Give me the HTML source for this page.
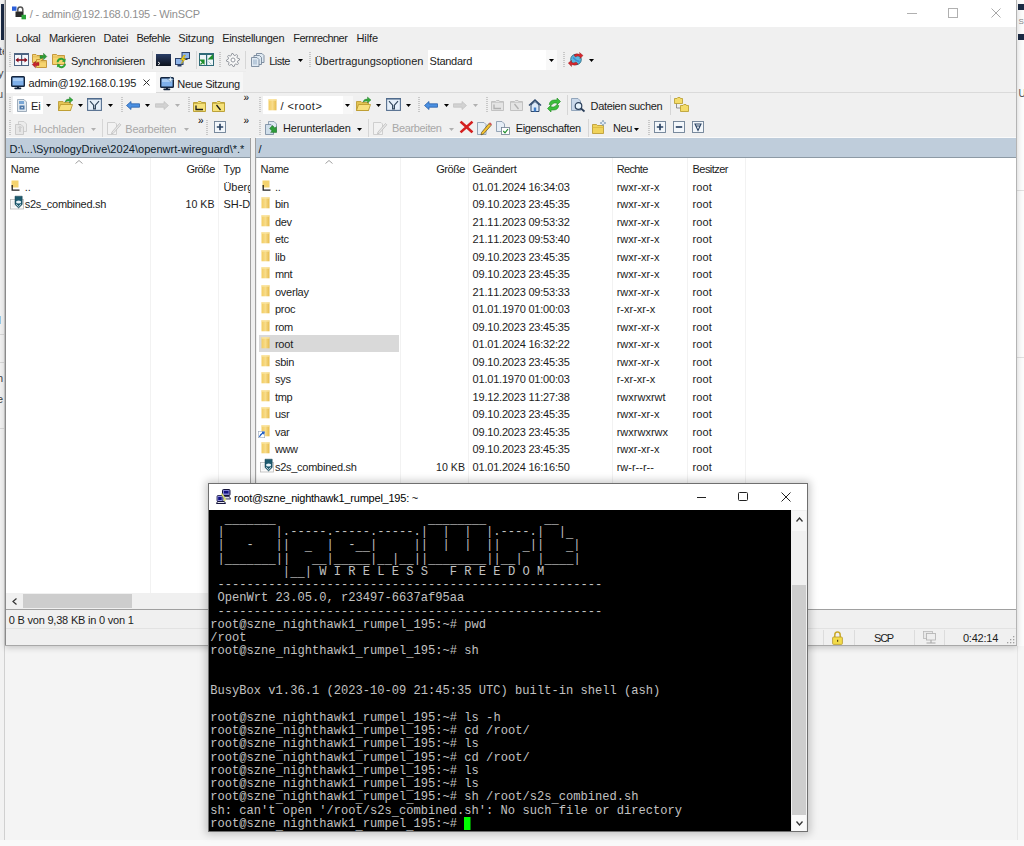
<!DOCTYPE html>
<html><head><meta charset="utf-8"><style>
html,body{margin:0;padding:0;width:1024px;height:846px;overflow:hidden;background:#f4f4f4}
#r{position:relative;width:1024px;height:846px;overflow:hidden}
#r div{position:absolute;box-sizing:border-box}
#r .t{white-space:pre;font-kerning:none;font-feature-settings:"kern" 0,"liga" 0;-webkit-text-stroke:0px}
</style></head><body><div id="r">
<div style="left:0px;top:0px;width:1024px;height:846px;background:#f4f4f4;"></div>
<div style="left:0px;top:0px;width:5px;height:846px;background:#f2f2f2;"></div>
<div class="t" style="left:-1.00px;top:45.85px;font-size:11px;line-height:11px;color:#444;font-family:'Liberation Sans';width:6.00px;overflow:hidden;">te</div>
<div class="t" style="left:-2.00px;top:68.35px;font-size:11px;line-height:11px;color:#444;font-family:'Liberation Sans';width:7.00px;overflow:hidden;">y</div>
<div class="t" style="left:-3.00px;top:89.35px;font-size:11px;line-height:11px;color:#555;font-family:'Liberation Sans';width:8.00px;overflow:hidden;">u</div>
<div class="t" style="left:-4.00px;top:314.85px;font-size:11px;line-height:11px;color:#555;font-family:'Liberation Sans';width:9.00px;overflow:hidden;">ll</div>
<div class="t" style="left:-3.00px;top:372.85px;font-size:11px;line-height:11px;color:#444;font-family:'Liberation Sans';width:8.00px;overflow:hidden;">h</div>
<div class="t" style="left:-3.00px;top:393.85px;font-size:11px;line-height:11px;color:#444;font-family:'Liberation Sans';width:8.00px;overflow:hidden;">e</div>
<div style="left:0px;top:428px;width:5px;height:1px;background:#d8d8d8;"></div>
<div style="left:0px;top:334px;width:5px;height:1px;background:#d8d8d8;"></div>
<div style="left:0px;top:362px;width:5px;height:1px;background:#d8d8d8;"></div>
<div style="left:1px;top:4px;width:4px;height:36px;background:#1b2a44;"></div>
<div style="left:4px;top:0px;width:1px;height:846px;background:#d0d0d0;"></div>
<div style="left:0px;top:840px;width:1024px;height:6px;background:#f9f9f9;"></div>
<div style="left:1017px;top:646px;width:7px;height:194px;background:#f6f6f6;"></div>
<div style="left:1017px;top:646px;width:1px;height:194px;background:#e6e6e6;"></div>
<div style="left:1017px;top:0px;width:7px;height:646px;background:#fcfcfc;"></div>
<div class="t" style="left:1018.50px;top:17.90px;font-size:8px;line-height:8px;color:#888;font-family:'Liberation Sans';">S</div>
<div class="t" style="left:1018.50px;top:89.20px;font-size:10px;line-height:10px;color:#555;font-family:'Liberation Sans';">U</div>
<div style="left:1017px;top:190px;width:7px;height:1px;background:#e0e0e0;"></div>
<div style="left:1017px;top:357px;width:7px;height:1px;background:#e0e0e0;"></div>
<div style="left:1018px;top:4px;width:6px;height:6px;background:#1b2a44;"></div>
<div style="left:1018px;top:34px;width:6px;height:6px;background:#1b2a44;"></div>
<div style="left:5px;top:0px;width:1012px;height:646px;background:#f0f0f0;box-shadow:0 2px 6px rgba(0,0,0,0.18);"></div>
<div style="left:5px;top:0px;width:1px;height:646px;background:#8a8a8a;"></div>
<div style="left:1016px;top:0px;width:1px;height:646px;background:#b4b4b4;"></div>
<div style="left:5px;top:645px;width:1012px;height:1px;background:#a8a8a8;"></div>
<div style="left:6px;top:0px;width:1010px;height:27px;background:#ffffff;"></div>
<div class="t" style="left:29.80px;top:9.15px;font-size:11px;line-height:11px;color:#8f8f8f;font-family:'Liberation Sans';letter-spacing:-0.176px;">/ - admin@192.168.0.195 - WinSCP</div>
<div style="left:907px;top:13px;width:10px;height:1px;background:#b0b0b0;"></div>
<div style="left:948px;top:8px;width:10px;height:10px;background:transparent;border:1px solid #b0b0b0;box-sizing:border-box;"></div>
<svg style="position:absolute;left:991px;top:8px" width="10" height="10" viewBox="0 0 10 10"><path d="M0.5 0.5L9.5 9.5M9.5 0.5L0.5 9.5" stroke="#a8a8a8" stroke-width="1"/></svg>
<div class="t" style="left:16.10px;top:32.95px;font-size:11px;line-height:11px;color:#1c1c1c;font-family:'Liberation Sans';letter-spacing:-0.439px;">Lokal</div>
<div class="t" style="left:48.90px;top:32.95px;font-size:11px;line-height:11px;color:#1c1c1c;font-family:'Liberation Sans';letter-spacing:-0.278px;">Markieren</div>
<div class="t" style="left:103.50px;top:32.95px;font-size:11px;line-height:11px;color:#1c1c1c;font-family:'Liberation Sans';letter-spacing:-0.176px;">Datei</div>
<div class="t" style="left:136.40px;top:32.95px;font-size:11px;line-height:11px;color:#1c1c1c;font-family:'Liberation Sans';letter-spacing:-0.530px;">Befehle</div>
<div class="t" style="left:178.30px;top:32.95px;font-size:11px;line-height:11px;color:#1c1c1c;font-family:'Liberation Sans';letter-spacing:-0.156px;">Sitzung</div>
<div class="t" style="left:222.20px;top:32.95px;font-size:11px;line-height:11px;color:#1c1c1c;font-family:'Liberation Sans';letter-spacing:-0.311px;">Einstellungen</div>
<div class="t" style="left:293.30px;top:32.95px;font-size:11px;line-height:11px;color:#1c1c1c;font-family:'Liberation Sans';letter-spacing:-0.538px;">Fernrechner</div>
<div class="t" style="left:356.50px;top:32.95px;font-size:11px;line-height:11px;color:#1c1c1c;font-family:'Liberation Sans';letter-spacing:-0.101px;">Hilfe</div>
<div style="left:6px;top:71px;width:240px;height:1px;background:#ececec;"></div>
<svg style="position:absolute;left:9px;top:52px" width="2" height="16" viewBox="0 0 2 16"><rect x="0" y="0" width="2" height="1" fill="#c8c8c8"/><rect x="0" y="2" width="2" height="1" fill="#c8c8c8"/><rect x="0" y="4" width="2" height="1" fill="#c8c8c8"/><rect x="0" y="6" width="2" height="1" fill="#c8c8c8"/><rect x="0" y="8" width="2" height="1" fill="#c8c8c8"/><rect x="0" y="10" width="2" height="1" fill="#c8c8c8"/><rect x="0" y="12" width="2" height="1" fill="#c8c8c8"/><rect x="0" y="14" width="2" height="1" fill="#c8c8c8"/></svg>
<div class="t" style="left:70.90px;top:56.15px;font-size:11px;line-height:11px;color:#1c1c1c;font-family:'Liberation Sans';letter-spacing:-0.325px;">Synchronisieren</div>
<div style="left:152px;top:51px;width:1px;height:18px;background:#d6d6d6;"></div>
<div style="left:196px;top:51px;width:1px;height:18px;background:#d6d6d6;"></div>
<svg style="position:absolute;left:219px;top:52px" width="2" height="16" viewBox="0 0 2 16"><rect x="0" y="0" width="2" height="1" fill="#c8c8c8"/><rect x="0" y="2" width="2" height="1" fill="#c8c8c8"/><rect x="0" y="4" width="2" height="1" fill="#c8c8c8"/><rect x="0" y="6" width="2" height="1" fill="#c8c8c8"/><rect x="0" y="8" width="2" height="1" fill="#c8c8c8"/><rect x="0" y="10" width="2" height="1" fill="#c8c8c8"/><rect x="0" y="12" width="2" height="1" fill="#c8c8c8"/><rect x="0" y="14" width="2" height="1" fill="#c8c8c8"/></svg>
<div style="left:245px;top:51px;width:1px;height:18px;background:#d6d6d6;"></div>
<div class="t" style="left:269.30px;top:56.15px;font-size:11px;line-height:11px;color:#1c1c1c;font-family:'Liberation Sans';letter-spacing:-0.547px;">Liste</div>
<svg style="position:absolute;left:297.6px;top:59px" width="5" height="3" viewBox="0 0 5 3"><path d="M0 0H5L2.5 3Z" fill="#000"/></svg>
<svg style="position:absolute;left:309px;top:52px" width="2" height="16" viewBox="0 0 2 16"><rect x="0" y="0" width="2" height="1" fill="#c8c8c8"/><rect x="0" y="2" width="2" height="1" fill="#c8c8c8"/><rect x="0" y="4" width="2" height="1" fill="#c8c8c8"/><rect x="0" y="6" width="2" height="1" fill="#c8c8c8"/><rect x="0" y="8" width="2" height="1" fill="#c8c8c8"/><rect x="0" y="10" width="2" height="1" fill="#c8c8c8"/><rect x="0" y="12" width="2" height="1" fill="#c8c8c8"/><rect x="0" y="14" width="2" height="1" fill="#c8c8c8"/></svg>
<div class="t" style="left:314.70px;top:56.15px;font-size:11px;line-height:11px;color:#1c1c1c;font-family:'Liberation Sans';letter-spacing:-0.008px;">Übertragungsoptionen</div>
<div style="left:428px;top:50px;width:118px;height:20px;background:#ffffff;"></div>
<div style="left:546px;top:50px;width:11px;height:20px;background:#f8f8f8;"></div>
<div class="t" style="left:429.60px;top:56.15px;font-size:11px;line-height:11px;color:#1c1c1c;font-family:'Liberation Sans';letter-spacing:-0.281px;">Standard</div>
<svg style="position:absolute;left:549px;top:59px" width="5" height="3" viewBox="0 0 5 3"><path d="M0 0H5L2.5 3Z" fill="#000"/></svg>
<svg style="position:absolute;left:563px;top:52px" width="2" height="16" viewBox="0 0 2 16"><rect x="0" y="0" width="2" height="1" fill="#c8c8c8"/><rect x="0" y="2" width="2" height="1" fill="#c8c8c8"/><rect x="0" y="4" width="2" height="1" fill="#c8c8c8"/><rect x="0" y="6" width="2" height="1" fill="#c8c8c8"/><rect x="0" y="8" width="2" height="1" fill="#c8c8c8"/><rect x="0" y="10" width="2" height="1" fill="#c8c8c8"/><rect x="0" y="12" width="2" height="1" fill="#c8c8c8"/><rect x="0" y="14" width="2" height="1" fill="#c8c8c8"/></svg>
<svg style="position:absolute;left:588.5px;top:59px" width="5" height="3" viewBox="0 0 5 3"><path d="M0 0H5L2.5 3Z" fill="#000"/></svg>
<div style="left:156px;top:72px;width:87px;height:20px;background:#f6f6f6;"></div>
<div style="left:6px;top:72px;width:150px;height:21px;background:#ffffff;"></div>
<div style="left:6px;top:92px;width:1010px;height:1px;background:#dadada;"></div>
<div style="left:6px;top:92px;width:150px;height:1px;background:#ffffff;"></div>
<div class="t" style="left:28.60px;top:78.25px;font-size:11px;line-height:11px;color:#1c1c1c;font-family:'Liberation Sans';letter-spacing:-0.204px;">admin@192.168.0.195</div>
<svg style="position:absolute;left:143px;top:79px" width="7" height="7" viewBox="0 0 7 7"><path d="M0.5 0.5L6.5 6.5M6.5 0.5L0.5 6.5" stroke="#333" stroke-width="1"/></svg>
<div class="t" style="left:177.30px;top:78.75px;font-size:11px;line-height:11px;color:#1c1c1c;font-family:'Liberation Sans';letter-spacing:-0.295px;">Neue Sitzung</div>
<svg style="position:absolute;left:9px;top:97px" width="2" height="16" viewBox="0 0 2 16"><rect x="0" y="0" width="2" height="1" fill="#c8c8c8"/><rect x="0" y="2" width="2" height="1" fill="#c8c8c8"/><rect x="0" y="4" width="2" height="1" fill="#c8c8c8"/><rect x="0" y="6" width="2" height="1" fill="#c8c8c8"/><rect x="0" y="8" width="2" height="1" fill="#c8c8c8"/><rect x="0" y="10" width="2" height="1" fill="#c8c8c8"/><rect x="0" y="12" width="2" height="1" fill="#c8c8c8"/><rect x="0" y="14" width="2" height="1" fill="#c8c8c8"/></svg>
<div style="left:13px;top:96px;width:30px;height:18px;background:#ffffff;"></div>
<div class="t" style="left:31.00px;top:100.85px;font-size:11px;line-height:11px;color:#1c1c1c;font-family:'Liberation Sans';width:9.50px;overflow:hidden;">Eigenschaften</div>
<svg style="position:absolute;left:46px;top:103.5px" width="5" height="3" viewBox="0 0 5 3"><path d="M0 0H5L2.5 3Z" fill="#000"/></svg>
<svg style="position:absolute;left:78px;top:103.5px" width="5" height="3" viewBox="0 0 5 3"><path d="M0 0H5L2.5 3Z" fill="#000"/></svg>
<svg style="position:absolute;left:107.5px;top:103.5px" width="5" height="3" viewBox="0 0 5 3"><path d="M0 0H5L2.5 3Z" fill="#000"/></svg>
<svg style="position:absolute;left:120.5px;top:97px" width="2" height="16" viewBox="0 0 2 16"><rect x="0" y="0" width="2" height="1" fill="#c8c8c8"/><rect x="0" y="2" width="2" height="1" fill="#c8c8c8"/><rect x="0" y="4" width="2" height="1" fill="#c8c8c8"/><rect x="0" y="6" width="2" height="1" fill="#c8c8c8"/><rect x="0" y="8" width="2" height="1" fill="#c8c8c8"/><rect x="0" y="10" width="2" height="1" fill="#c8c8c8"/><rect x="0" y="12" width="2" height="1" fill="#c8c8c8"/><rect x="0" y="14" width="2" height="1" fill="#c8c8c8"/></svg>
<svg style="position:absolute;left:145.3px;top:103.5px" width="5" height="3" viewBox="0 0 5 3"><path d="M0 0H5L2.5 3Z" fill="#000"/></svg>
<svg style="position:absolute;left:174.5px;top:103.5px" width="5" height="3" viewBox="0 0 5 3"><path d="M0 0H5L2.5 3Z" fill="#b0b0b0"/></svg>
<svg style="position:absolute;left:188px;top:97px" width="2" height="16" viewBox="0 0 2 16"><rect x="0" y="0" width="2" height="1" fill="#c8c8c8"/><rect x="0" y="2" width="2" height="1" fill="#c8c8c8"/><rect x="0" y="4" width="2" height="1" fill="#c8c8c8"/><rect x="0" y="6" width="2" height="1" fill="#c8c8c8"/><rect x="0" y="8" width="2" height="1" fill="#c8c8c8"/><rect x="0" y="10" width="2" height="1" fill="#c8c8c8"/><rect x="0" y="12" width="2" height="1" fill="#c8c8c8"/><rect x="0" y="14" width="2" height="1" fill="#c8c8c8"/></svg>
<div class="t" style="left:243.50px;top:93.20px;font-size:10px;line-height:10px;color:#000;font-family:'Liberation Sans';">»</div>
<svg style="position:absolute;left:9px;top:120px" width="2" height="16" viewBox="0 0 2 16"><rect x="0" y="0" width="2" height="1" fill="#c8c8c8"/><rect x="0" y="2" width="2" height="1" fill="#c8c8c8"/><rect x="0" y="4" width="2" height="1" fill="#c8c8c8"/><rect x="0" y="6" width="2" height="1" fill="#c8c8c8"/><rect x="0" y="8" width="2" height="1" fill="#c8c8c8"/><rect x="0" y="10" width="2" height="1" fill="#c8c8c8"/><rect x="0" y="12" width="2" height="1" fill="#c8c8c8"/><rect x="0" y="14" width="2" height="1" fill="#c8c8c8"/></svg>
<div class="t" style="left:33.60px;top:123.75px;font-size:11px;line-height:11px;color:#a8a8a8;font-family:'Liberation Sans';letter-spacing:-0.199px;">Hochladen</div>
<svg style="position:absolute;left:91px;top:127.5px" width="5" height="3" viewBox="0 0 5 3"><path d="M0 0H5L2.5 3Z" fill="#b0b0b0"/></svg>
<div style="left:102px;top:119px;width:1px;height:18px;background:#d6d6d6;"></div>
<div class="t" style="left:125.30px;top:123.75px;font-size:11px;line-height:11px;color:#a8a8a8;font-family:'Liberation Sans';letter-spacing:-0.241px;">Bearbeiten</div>
<svg style="position:absolute;left:183.5px;top:127.5px" width="5" height="3" viewBox="0 0 5 3"><path d="M0 0H5L2.5 3Z" fill="#b0b0b0"/></svg>
<div class="t" style="left:198.00px;top:116.20px;font-size:10px;line-height:10px;color:#000;font-family:'Liberation Sans';">»</div>
<svg style="position:absolute;left:206px;top:120px" width="2" height="16" viewBox="0 0 2 16"><rect x="0" y="0" width="2" height="1" fill="#c8c8c8"/><rect x="0" y="2" width="2" height="1" fill="#c8c8c8"/><rect x="0" y="4" width="2" height="1" fill="#c8c8c8"/><rect x="0" y="6" width="2" height="1" fill="#c8c8c8"/><rect x="0" y="8" width="2" height="1" fill="#c8c8c8"/><rect x="0" y="10" width="2" height="1" fill="#c8c8c8"/><rect x="0" y="12" width="2" height="1" fill="#c8c8c8"/><rect x="0" y="14" width="2" height="1" fill="#c8c8c8"/></svg>
<div class="t" style="left:243.50px;top:116.20px;font-size:10px;line-height:10px;color:#000;font-family:'Liberation Sans';">»</div>
<svg style="position:absolute;left:258.5px;top:97px" width="2" height="16" viewBox="0 0 2 16"><rect x="0" y="0" width="2" height="1" fill="#c8c8c8"/><rect x="0" y="2" width="2" height="1" fill="#c8c8c8"/><rect x="0" y="4" width="2" height="1" fill="#c8c8c8"/><rect x="0" y="6" width="2" height="1" fill="#c8c8c8"/><rect x="0" y="8" width="2" height="1" fill="#c8c8c8"/><rect x="0" y="10" width="2" height="1" fill="#c8c8c8"/><rect x="0" y="12" width="2" height="1" fill="#c8c8c8"/><rect x="0" y="14" width="2" height="1" fill="#c8c8c8"/></svg>
<div style="left:263px;top:96px;width:80px;height:18px;background:#ffffff;"></div>
<div style="left:343px;top:96px;width:10px;height:18px;background:#f7f7f7;"></div>
<div class="t" style="left:280.50px;top:100.65px;font-size:11px;line-height:11px;color:#1c1c1c;font-family:'Liberation Sans';letter-spacing:0.486px;">/ &lt;root&gt;</div>
<svg style="position:absolute;left:344.5px;top:103.5px" width="5" height="3" viewBox="0 0 5 3"><path d="M0 0H5L2.5 3Z" fill="#000"/></svg>
<svg style="position:absolute;left:376px;top:103.5px" width="5" height="3" viewBox="0 0 5 3"><path d="M0 0H5L2.5 3Z" fill="#000"/></svg>
<svg style="position:absolute;left:405.5px;top:103.5px" width="5" height="3" viewBox="0 0 5 3"><path d="M0 0H5L2.5 3Z" fill="#000"/></svg>
<svg style="position:absolute;left:418px;top:97px" width="2" height="16" viewBox="0 0 2 16"><rect x="0" y="0" width="2" height="1" fill="#c8c8c8"/><rect x="0" y="2" width="2" height="1" fill="#c8c8c8"/><rect x="0" y="4" width="2" height="1" fill="#c8c8c8"/><rect x="0" y="6" width="2" height="1" fill="#c8c8c8"/><rect x="0" y="8" width="2" height="1" fill="#c8c8c8"/><rect x="0" y="10" width="2" height="1" fill="#c8c8c8"/><rect x="0" y="12" width="2" height="1" fill="#c8c8c8"/><rect x="0" y="14" width="2" height="1" fill="#c8c8c8"/></svg>
<svg style="position:absolute;left:443.5px;top:103.5px" width="5" height="3" viewBox="0 0 5 3"><path d="M0 0H5L2.5 3Z" fill="#000"/></svg>
<svg style="position:absolute;left:472.5px;top:103.5px" width="5" height="3" viewBox="0 0 5 3"><path d="M0 0H5L2.5 3Z" fill="#b0b0b0"/></svg>
<svg style="position:absolute;left:485.5px;top:97px" width="2" height="16" viewBox="0 0 2 16"><rect x="0" y="0" width="2" height="1" fill="#c8c8c8"/><rect x="0" y="2" width="2" height="1" fill="#c8c8c8"/><rect x="0" y="4" width="2" height="1" fill="#c8c8c8"/><rect x="0" y="6" width="2" height="1" fill="#c8c8c8"/><rect x="0" y="8" width="2" height="1" fill="#c8c8c8"/><rect x="0" y="10" width="2" height="1" fill="#c8c8c8"/><rect x="0" y="12" width="2" height="1" fill="#c8c8c8"/><rect x="0" y="14" width="2" height="1" fill="#c8c8c8"/></svg>
<div style="left:567px;top:95px;width:1px;height:20px;background:#d6d6d6;"></div>
<div class="t" style="left:590.60px;top:101.15px;font-size:11px;line-height:11px;color:#1c1c1c;font-family:'Liberation Sans';letter-spacing:-0.332px;">Dateien suchen</div>
<div style="left:670px;top:95px;width:1px;height:20px;background:#d6d6d6;"></div>
<svg style="position:absolute;left:258.5px;top:120px" width="2" height="16" viewBox="0 0 2 16"><rect x="0" y="0" width="2" height="1" fill="#c8c8c8"/><rect x="0" y="2" width="2" height="1" fill="#c8c8c8"/><rect x="0" y="4" width="2" height="1" fill="#c8c8c8"/><rect x="0" y="6" width="2" height="1" fill="#c8c8c8"/><rect x="0" y="8" width="2" height="1" fill="#c8c8c8"/><rect x="0" y="10" width="2" height="1" fill="#c8c8c8"/><rect x="0" y="12" width="2" height="1" fill="#c8c8c8"/><rect x="0" y="14" width="2" height="1" fill="#c8c8c8"/></svg>
<div class="t" style="left:283.00px;top:123.25px;font-size:11px;line-height:11px;color:#1c1c1c;font-family:'Liberation Sans';letter-spacing:-0.147px;">Herunterladen</div>
<svg style="position:absolute;left:356.5px;top:127.5px" width="5" height="3" viewBox="0 0 5 3"><path d="M0 0H5L2.5 3Z" fill="#000"/></svg>
<div style="left:368px;top:119px;width:1px;height:18px;background:#d6d6d6;"></div>
<div class="t" style="left:392.00px;top:123.25px;font-size:11px;line-height:11px;color:#a8a8a8;font-family:'Liberation Sans';letter-spacing:-0.361px;">Bearbeiten</div>
<svg style="position:absolute;left:448.5px;top:127.5px" width="5" height="3" viewBox="0 0 5 3"><path d="M0 0H5L2.5 3Z" fill="#b0b0b0"/></svg>
<div class="t" style="left:515.70px;top:123.25px;font-size:11px;line-height:11px;color:#1c1c1c;font-family:'Liberation Sans';letter-spacing:-0.363px;">Eigenschaften</div>
<div style="left:588px;top:119px;width:1px;height:18px;background:#d6d6d6;"></div>
<div class="t" style="left:613.00px;top:123.25px;font-size:11px;line-height:11px;color:#1c1c1c;font-family:'Liberation Sans';letter-spacing:-0.393px;">Neu</div>
<svg style="position:absolute;left:634px;top:127.5px" width="5" height="3" viewBox="0 0 5 3"><path d="M0 0H5L2.5 3Z" fill="#000"/></svg>
<svg style="position:absolute;left:648px;top:120px" width="2" height="16" viewBox="0 0 2 16"><rect x="0" y="0" width="2" height="1" fill="#c8c8c8"/><rect x="0" y="2" width="2" height="1" fill="#c8c8c8"/><rect x="0" y="4" width="2" height="1" fill="#c8c8c8"/><rect x="0" y="6" width="2" height="1" fill="#c8c8c8"/><rect x="0" y="8" width="2" height="1" fill="#c8c8c8"/><rect x="0" y="10" width="2" height="1" fill="#c8c8c8"/><rect x="0" y="12" width="2" height="1" fill="#c8c8c8"/><rect x="0" y="14" width="2" height="1" fill="#c8c8c8"/></svg>
<div style="left:6px;top:137px;width:245px;height:1px;background:#fafafa;"></div>
<div style="left:256px;top:137px;width:760px;height:1px;background:#fafafa;"></div>
<div style="left:6px;top:138px;width:245px;height:20px;background:#bfcddb;"></div>
<div style="left:256px;top:138px;width:760px;height:20px;background:#bfcddb;"></div>
<div style="left:6px;top:157px;width:245px;height:1px;background:#8d9aa5;"></div>
<div style="left:256px;top:157px;width:760px;height:1px;background:#8d9aa5;"></div>
<div class="t" style="left:9.50px;top:144.15px;font-size:11px;line-height:11px;color:#0c1a2a;font-family:'Liberation Sans';letter-spacing:0.029px;">D:\...\SynologyDrive\2024\openwrt-wireguard\*.*</div>
<div class="t" style="left:258.40px;top:144.15px;font-size:11px;line-height:11px;color:#0c1a2a;font-family:'Liberation Sans';">/</div>
<div style="left:6px;top:158px;width:245px;height:435px;background:#ffffff;"></div>
<div style="left:250px;top:138px;width:1px;height:471px;background:#a0a0a0;"></div>
<div style="left:150px;top:158px;width:1px;height:435px;background:#f2f2f2;"></div>
<div style="left:218px;top:158px;width:1px;height:435px;background:#f2f2f2;"></div>
<div class="t" style="left:10.80px;top:163.75px;font-size:11px;line-height:11px;color:#1c1c1c;font-family:'Liberation Sans';letter-spacing:-0.211px;">Name</div>
<svg style="position:absolute;left:75px;top:159.5px" width="8" height="4" viewBox="0 0 8 4"><path d="M0.5 3.5L4 0.5L7.5 3.5" stroke="#a0a0a0" fill="none"/></svg>
<div class="t" style="left:186.50px;top:163.75px;font-size:11px;line-height:11px;color:#1c1c1c;font-family:'Liberation Sans';letter-spacing:-0.595px;">Größe</div>
<div class="t" style="left:223.40px;top:163.75px;font-size:11px;line-height:11px;color:#1c1c1c;font-family:'Liberation Sans';letter-spacing:-0.446px;">Typ</div>
<div class="t" style="left:24.80px;top:181.65px;font-size:11px;line-height:11px;color:#1c1c1c;font-family:'Liberation Sans';">..</div>
<div class="t" style="left:223.40px;top:181.65px;font-size:11px;line-height:11px;color:#1c1c1c;font-family:'Liberation Sans';width:27.10px;overflow:hidden;">Übergeordnetes Verzeichnis</div>
<div class="t" style="left:24.80px;top:198.95px;font-size:11px;line-height:11px;color:#1c1c1c;font-family:'Liberation Sans';letter-spacing:-0.294px;">s2s_combined.sh</div>
<div class="t" style="left:185.62px;top:199.29px;font-size:10.6px;line-height:10.6px;color:#1c1c1c;font-family:'Liberation Sans';">10 KB</div>
<div class="t" style="left:223.40px;top:198.95px;font-size:11px;line-height:11px;color:#1c1c1c;font-family:'Liberation Sans';width:27.10px;overflow:hidden;">SH-Datei</div>
<div style="left:6px;top:593px;width:245px;height:16px;background:#f0f0f0;"></div>
<div style="left:23px;top:594px;width:109px;height:14px;background:#cdcdcd;"></div>
<svg style="position:absolute;left:12px;top:598px" width="5" height="7" viewBox="0 0 5 7"><path d="M4.5 0.5L1 3.5L4.5 6.5" stroke="#333" stroke-width="1.2" fill="none"/></svg>
<div style="left:6px;top:609px;width:245px;height:1px;background:#a0a0a0;"></div>
<div style="left:255px;top:138px;width:1px;height:471px;background:#a0a0a0;"></div>
<div style="left:257px;top:158px;width:759px;height:451px;background:#ffffff;"></div>
<div style="left:400px;top:158px;width:1px;height:451px;background:#f2f2f2;"></div>
<div style="left:468px;top:158px;width:1px;height:451px;background:#f2f2f2;"></div>
<div style="left:612px;top:158px;width:1px;height:451px;background:#f2f2f2;"></div>
<div style="left:687px;top:158px;width:1px;height:451px;background:#f2f2f2;"></div>
<div style="left:745px;top:158px;width:1px;height:451px;background:#f2f2f2;"></div>
<div style="left:256px;top:609px;width:760px;height:1px;background:#a0a0a0;"></div>
<div style="left:259px;top:335px;width:140px;height:17px;background:#d9d9d9;"></div>
<div class="t" style="left:260.50px;top:163.75px;font-size:11px;line-height:11px;color:#1c1c1c;font-family:'Liberation Sans';letter-spacing:-0.211px;">Name</div>
<svg style="position:absolute;left:325px;top:159.5px" width="8" height="4" viewBox="0 0 8 4"><path d="M0.5 3.5L4 0.5L7.5 3.5" stroke="#a0a0a0" fill="none"/></svg>
<div class="t" style="left:436.30px;top:163.75px;font-size:11px;line-height:11px;color:#1c1c1c;font-family:'Liberation Sans';letter-spacing:-0.495px;">Größe</div>
<div class="t" style="left:472.60px;top:163.75px;font-size:11px;line-height:11px;color:#1c1c1c;font-family:'Liberation Sans';letter-spacing:-0.233px;">Geändert</div>
<div class="t" style="left:616.70px;top:163.75px;font-size:11px;line-height:11px;color:#1c1c1c;font-family:'Liberation Sans';letter-spacing:-0.659px;">Rechte</div>
<div class="t" style="left:692.50px;top:163.75px;font-size:11px;line-height:11px;color:#1c1c1c;font-family:'Liberation Sans';letter-spacing:-0.529px;">Besitzer</div>
<div class="t" style="left:274.90px;top:181.65px;font-size:11px;line-height:11px;color:#1c1c1c;font-family:'Liberation Sans';letter-spacing:-0.138px;">..</div>
<div class="t" style="left:472.60px;top:181.65px;font-size:11px;line-height:11px;color:#1c1c1c;font-family:'Liberation Sans';letter-spacing:-0.207px;">01.01.2024 16:34:03</div>
<div class="t" style="left:616.70px;top:181.65px;font-size:11px;line-height:11px;color:#1c1c1c;font-family:'Liberation Sans';">rwxr-xr-x</div>
<div class="t" style="left:692.50px;top:181.65px;font-size:11px;line-height:11px;color:#1c1c1c;font-family:'Liberation Sans';letter-spacing:0.136px;">root</div>
<div class="t" style="left:274.90px;top:199.15px;font-size:11px;line-height:11px;color:#1c1c1c;font-family:'Liberation Sans';letter-spacing:-0.220px;">bin</div>
<div class="t" style="left:472.60px;top:199.15px;font-size:11px;line-height:11px;color:#1c1c1c;font-family:'Liberation Sans';letter-spacing:-0.207px;">09.10.2023 23:45:35</div>
<div class="t" style="left:616.70px;top:199.15px;font-size:11px;line-height:11px;color:#1c1c1c;font-family:'Liberation Sans';">rwxr-xr-x</div>
<div class="t" style="left:692.50px;top:199.15px;font-size:11px;line-height:11px;color:#1c1c1c;font-family:'Liberation Sans';letter-spacing:0.136px;">root</div>
<div class="t" style="left:274.90px;top:216.65px;font-size:11px;line-height:11px;color:#1c1c1c;font-family:'Liberation Sans';letter-spacing:-0.266px;">dev</div>
<div class="t" style="left:472.60px;top:216.65px;font-size:11px;line-height:11px;color:#1c1c1c;font-family:'Liberation Sans';letter-spacing:-0.207px;">21.11.2023 09:53:32</div>
<div class="t" style="left:616.70px;top:216.65px;font-size:11px;line-height:11px;color:#1c1c1c;font-family:'Liberation Sans';">rwxr-xr-x</div>
<div class="t" style="left:692.50px;top:216.65px;font-size:11px;line-height:11px;color:#1c1c1c;font-family:'Liberation Sans';letter-spacing:0.136px;">root</div>
<div class="t" style="left:274.90px;top:234.15px;font-size:11px;line-height:11px;color:#1c1c1c;font-family:'Liberation Sans';letter-spacing:-0.220px;">etc</div>
<div class="t" style="left:472.60px;top:234.15px;font-size:11px;line-height:11px;color:#1c1c1c;font-family:'Liberation Sans';letter-spacing:-0.207px;">21.11.2023 09:53:40</div>
<div class="t" style="left:616.70px;top:234.15px;font-size:11px;line-height:11px;color:#1c1c1c;font-family:'Liberation Sans';">rwxr-xr-x</div>
<div class="t" style="left:692.50px;top:234.15px;font-size:11px;line-height:11px;color:#1c1c1c;font-family:'Liberation Sans';letter-spacing:0.136px;">root</div>
<div class="t" style="left:274.90px;top:251.65px;font-size:11px;line-height:11px;color:#1c1c1c;font-family:'Liberation Sans';letter-spacing:-0.165px;">lib</div>
<div class="t" style="left:472.60px;top:251.65px;font-size:11px;line-height:11px;color:#1c1c1c;font-family:'Liberation Sans';letter-spacing:-0.207px;">09.10.2023 23:45:35</div>
<div class="t" style="left:616.70px;top:251.65px;font-size:11px;line-height:11px;color:#1c1c1c;font-family:'Liberation Sans';">rwxr-xr-x</div>
<div class="t" style="left:692.50px;top:251.65px;font-size:11px;line-height:11px;color:#1c1c1c;font-family:'Liberation Sans';letter-spacing:0.136px;">root</div>
<div class="t" style="left:274.90px;top:269.15px;font-size:11px;line-height:11px;color:#1c1c1c;font-family:'Liberation Sans';letter-spacing:-0.275px;">mnt</div>
<div class="t" style="left:472.60px;top:269.15px;font-size:11px;line-height:11px;color:#1c1c1c;font-family:'Liberation Sans';letter-spacing:-0.207px;">09.10.2023 23:45:35</div>
<div class="t" style="left:616.70px;top:269.15px;font-size:11px;line-height:11px;color:#1c1c1c;font-family:'Liberation Sans';">rwxr-xr-x</div>
<div class="t" style="left:692.50px;top:269.15px;font-size:11px;line-height:11px;color:#1c1c1c;font-family:'Liberation Sans';letter-spacing:0.136px;">root</div>
<div class="t" style="left:274.90px;top:286.65px;font-size:11px;line-height:11px;color:#1c1c1c;font-family:'Liberation Sans';letter-spacing:-0.228px;">overlay</div>
<div class="t" style="left:472.60px;top:286.65px;font-size:11px;line-height:11px;color:#1c1c1c;font-family:'Liberation Sans';letter-spacing:-0.207px;">21.11.2023 09:53:33</div>
<div class="t" style="left:616.70px;top:286.65px;font-size:11px;line-height:11px;color:#1c1c1c;font-family:'Liberation Sans';">rwxr-xr-x</div>
<div class="t" style="left:692.50px;top:286.65px;font-size:11px;line-height:11px;color:#1c1c1c;font-family:'Liberation Sans';letter-spacing:0.136px;">root</div>
<div class="t" style="left:274.90px;top:304.15px;font-size:11px;line-height:11px;color:#1c1c1c;font-family:'Liberation Sans';letter-spacing:-0.241px;">proc</div>
<div class="t" style="left:472.60px;top:304.15px;font-size:11px;line-height:11px;color:#1c1c1c;font-family:'Liberation Sans';letter-spacing:-0.207px;">01.01.1970 01:00:03</div>
<div class="t" style="left:616.70px;top:304.15px;font-size:11px;line-height:11px;color:#1c1c1c;font-family:'Liberation Sans';">r-xr-xr-x</div>
<div class="t" style="left:692.50px;top:304.15px;font-size:11px;line-height:11px;color:#1c1c1c;font-family:'Liberation Sans';letter-spacing:0.136px;">root</div>
<div class="t" style="left:274.90px;top:321.65px;font-size:11px;line-height:11px;color:#1c1c1c;font-family:'Liberation Sans';letter-spacing:-0.284px;">rom</div>
<div class="t" style="left:472.60px;top:321.65px;font-size:11px;line-height:11px;color:#1c1c1c;font-family:'Liberation Sans';letter-spacing:-0.207px;">09.10.2023 23:45:35</div>
<div class="t" style="left:616.70px;top:321.65px;font-size:11px;line-height:11px;color:#1c1c1c;font-family:'Liberation Sans';">rwxr-xr-x</div>
<div class="t" style="left:692.50px;top:321.65px;font-size:11px;line-height:11px;color:#1c1c1c;font-family:'Liberation Sans';letter-spacing:0.136px;">root</div>
<div class="t" style="left:274.90px;top:339.15px;font-size:11px;line-height:11px;color:#1c1c1c;font-family:'Liberation Sans';letter-spacing:-0.213px;">root</div>
<div class="t" style="left:472.60px;top:339.15px;font-size:11px;line-height:11px;color:#1c1c1c;font-family:'Liberation Sans';letter-spacing:-0.207px;">01.01.2024 16:32:22</div>
<div class="t" style="left:616.70px;top:339.15px;font-size:11px;line-height:11px;color:#1c1c1c;font-family:'Liberation Sans';">rwxr-xr-x</div>
<div class="t" style="left:692.50px;top:339.15px;font-size:11px;line-height:11px;color:#1c1c1c;font-family:'Liberation Sans';letter-spacing:0.136px;">root</div>
<div class="t" style="left:274.90px;top:356.65px;font-size:11px;line-height:11px;color:#1c1c1c;font-family:'Liberation Sans';letter-spacing:-0.227px;">sbin</div>
<div class="t" style="left:472.60px;top:356.65px;font-size:11px;line-height:11px;color:#1c1c1c;font-family:'Liberation Sans';letter-spacing:-0.207px;">09.10.2023 23:45:35</div>
<div class="t" style="left:616.70px;top:356.65px;font-size:11px;line-height:11px;color:#1c1c1c;font-family:'Liberation Sans';">rwxr-xr-x</div>
<div class="t" style="left:692.50px;top:356.65px;font-size:11px;line-height:11px;color:#1c1c1c;font-family:'Liberation Sans';letter-spacing:0.136px;">root</div>
<div class="t" style="left:274.90px;top:374.15px;font-size:11px;line-height:11px;color:#1c1c1c;font-family:'Liberation Sans';letter-spacing:-0.248px;">sys</div>
<div class="t" style="left:472.60px;top:374.15px;font-size:11px;line-height:11px;color:#1c1c1c;font-family:'Liberation Sans';letter-spacing:-0.207px;">01.01.1970 01:00:03</div>
<div class="t" style="left:616.70px;top:374.15px;font-size:11px;line-height:11px;color:#1c1c1c;font-family:'Liberation Sans';">r-xr-xr-x</div>
<div class="t" style="left:692.50px;top:374.15px;font-size:11px;line-height:11px;color:#1c1c1c;font-family:'Liberation Sans';letter-spacing:0.136px;">root</div>
<div class="t" style="left:274.90px;top:391.65px;font-size:11px;line-height:11px;color:#1c1c1c;font-family:'Liberation Sans';letter-spacing:-0.275px;">tmp</div>
<div class="t" style="left:472.60px;top:391.65px;font-size:11px;line-height:11px;color:#1c1c1c;font-family:'Liberation Sans';letter-spacing:-0.207px;">19.12.2023 11:27:38</div>
<div class="t" style="left:616.70px;top:391.65px;font-size:11px;line-height:11px;color:#1c1c1c;font-family:'Liberation Sans';">rwxrwxrwt</div>
<div class="t" style="left:692.50px;top:391.65px;font-size:11px;line-height:11px;color:#1c1c1c;font-family:'Liberation Sans';letter-spacing:0.136px;">root</div>
<div class="t" style="left:274.90px;top:409.15px;font-size:11px;line-height:11px;color:#1c1c1c;font-family:'Liberation Sans';letter-spacing:-0.229px;">usr</div>
<div class="t" style="left:472.60px;top:409.15px;font-size:11px;line-height:11px;color:#1c1c1c;font-family:'Liberation Sans';letter-spacing:-0.207px;">09.10.2023 23:45:35</div>
<div class="t" style="left:616.70px;top:409.15px;font-size:11px;line-height:11px;color:#1c1c1c;font-family:'Liberation Sans';">rwxr-xr-x</div>
<div class="t" style="left:692.50px;top:409.15px;font-size:11px;line-height:11px;color:#1c1c1c;font-family:'Liberation Sans';letter-spacing:0.136px;">root</div>
<div class="t" style="left:274.90px;top:426.65px;font-size:11px;line-height:11px;color:#1c1c1c;font-family:'Liberation Sans';letter-spacing:-0.229px;">var</div>
<div class="t" style="left:472.60px;top:426.65px;font-size:11px;line-height:11px;color:#1c1c1c;font-family:'Liberation Sans';letter-spacing:-0.207px;">09.10.2023 23:45:35</div>
<div class="t" style="left:616.70px;top:426.65px;font-size:11px;line-height:11px;color:#1c1c1c;font-family:'Liberation Sans';">rwxrwxrwx</div>
<div class="t" style="left:692.50px;top:426.65px;font-size:11px;line-height:11px;color:#1c1c1c;font-family:'Liberation Sans';letter-spacing:0.136px;">root</div>
<div class="t" style="left:274.90px;top:444.15px;font-size:11px;line-height:11px;color:#1c1c1c;font-family:'Liberation Sans';letter-spacing:-0.357px;">www</div>
<div class="t" style="left:472.60px;top:444.15px;font-size:11px;line-height:11px;color:#1c1c1c;font-family:'Liberation Sans';letter-spacing:-0.207px;">09.10.2023 23:45:35</div>
<div class="t" style="left:616.70px;top:444.15px;font-size:11px;line-height:11px;color:#1c1c1c;font-family:'Liberation Sans';">rwxr-xr-x</div>
<div class="t" style="left:692.50px;top:444.15px;font-size:11px;line-height:11px;color:#1c1c1c;font-family:'Liberation Sans';letter-spacing:0.136px;">root</div>
<div class="t" style="left:274.90px;top:461.65px;font-size:11px;line-height:11px;color:#1c1c1c;font-family:'Liberation Sans';letter-spacing:-0.257px;">s2s_combined.sh</div>
<div class="t" style="left:436.12px;top:461.99px;font-size:10.6px;line-height:10.6px;color:#1c1c1c;font-family:'Liberation Sans';">10 KB</div>
<div class="t" style="left:472.60px;top:461.65px;font-size:11px;line-height:11px;color:#1c1c1c;font-family:'Liberation Sans';letter-spacing:-0.207px;">01.01.2024 16:16:50</div>
<div class="t" style="left:616.70px;top:461.65px;font-size:11px;line-height:11px;color:#1c1c1c;font-family:'Liberation Sans';">rw-r--r--</div>
<div class="t" style="left:692.50px;top:461.65px;font-size:11px;line-height:11px;color:#1c1c1c;font-family:'Liberation Sans';letter-spacing:0.136px;">root</div>
<div class="t" style="left:8.70px;top:614.65px;font-size:11px;line-height:11px;color:#1c1c1c;font-family:'Liberation Sans';letter-spacing:-0.202px;">0 B von 9,38 KB in 0 von 1</div>
<div style="left:6px;top:628px;width:1010px;height:1px;background:#e2e2e2;"></div>
<div style="left:823px;top:630px;width:1px;height:15px;background:#dcdcdc;"></div>
<div style="left:854px;top:630px;width:1px;height:15px;background:#dcdcdc;"></div>
<div style="left:914px;top:630px;width:1px;height:15px;background:#dcdcdc;"></div>
<div style="left:944px;top:630px;width:1px;height:15px;background:#dcdcdc;"></div>
<div class="t" style="left:874.00px;top:633.25px;font-size:11px;line-height:11px;color:#1c1c1c;font-family:'Liberation Sans';letter-spacing:-1.206px;">SCP</div>
<div class="t" style="left:963.00px;top:633.25px;font-size:11px;line-height:11px;color:#1c1c1c;font-family:'Liberation Sans';letter-spacing:-0.243px;">0:42:14</div>
<svg style="position:absolute;left:1007px;top:636px" width="8" height="8" viewBox="0 0 8 8"><rect x="6" y="0" width="1.3" height="1.3" fill="#a0a0a0"/><rect x="3" y="3" width="1.3" height="1.3" fill="#a0a0a0"/><rect x="6" y="3" width="1.3" height="1.3" fill="#a0a0a0"/><rect x="0" y="6" width="1.3" height="1.3" fill="#a0a0a0"/><rect x="3" y="6" width="1.3" height="1.3" fill="#a0a0a0"/><rect x="6" y="6" width="1.3" height="1.3" fill="#a0a0a0"/></svg>
<svg style="position:absolute;left:11.5px;top:5.5px;overflow:visible" width="15" height="14" viewBox="0 0 15 14"><rect x="0" y="0.5" width="4.5" height="4.3" fill="#2b5fd9"/><path d="M5.8 5.8V3.6Q5.8 1 8.3 1Q10.8 1 10.8 3.6V5.8" stroke="#555" stroke-width="1.5" fill="none"/><rect x="3.5" y="5.5" width="8" height="5.5" fill="#2a2a2a"/><rect x="9.5" y="8.8" width="4.5" height="4.5" fill="#2aa53a"/></svg>
<svg style="position:absolute;left:13.8px;top:53px;overflow:visible" width="15" height="13" viewBox="0 0 15 13"><rect x="0.5" y="0.5" width="14" height="12" fill="#f4f8fc" stroke="#4d6482"/><rect x="0" y="0" width="15" height="2" fill="#4d6482"/><rect x="7" y="0" width="1.2" height="13" fill="#4d6482"/><path d="M2.5 7H12.5" stroke="#8a1020" stroke-width="1.6"/><path d="M1.5 7L4.5 4.5V9.5Z M13.5 7L10.5 4.5V9.5Z" fill="#8a1020"/></svg>
<svg style="position:absolute;left:32.3px;top:52.6px;overflow:visible" width="15" height="15" viewBox="0 0 15 15"><path d="M0.5 1.5H4L5 2.5H10.5V9.5H0.5Z" fill="#f6d46e" stroke="#c09030" stroke-width="0.9"/><path d="M0.5 3.8H10.5" stroke="#d9b050" stroke-width="0.7"/><path d="M4.5 6.5H8L9 7.5H14.5V14.5H4.5Z" fill="#f6d46e" stroke="#c09030" stroke-width="0.9"/><path d="M4.5 8.8H14.5" stroke="#d9b050" stroke-width="0.7"/><path d="M8 5.5V2.5H11.5V0.2L14.8 3.5L11.5 6.8V4.8H10V5.5Z" fill="#2a9a36" stroke="#1c6e24" stroke-width="0.4"/><path d="M7 9.5V12.5H3.5V14.8L0.2 11.5L3.5 8.2V10.2H5V9.5Z" fill="#c8202a" stroke="#8a1016" stroke-width="0.4"/></svg>
<svg style="position:absolute;left:52px;top:53px;overflow:visible" width="14" height="14" viewBox="0 0 14 14"><path d="M0.5 1.5H4.5L5.5 2.5H12.5V11.5H0.5Z" fill="#f6d46e" stroke="#c09030" stroke-width="0.9"/><path d="M0.5 4H12.5" stroke="#d9b050" stroke-width="0.7"/><path d="M5.6 9.2A3.6 3.6 0 0 1 12 7.2" stroke="#2ea336" stroke-width="1.9" fill="none"/><path d="M13.8 5.6L13.2 9.4L9.8 8.2Z" fill="#2ea336"/><path d="M13 10.8A3.6 3.6 0 0 1 6.6 12.8" stroke="#2ea336" stroke-width="1.9" fill="none"/><path d="M4.8 14.4L5.4 10.6L8.8 11.8Z" fill="#2ea336"/></svg>
<svg style="position:absolute;left:156px;top:53.8px;overflow:visible" width="15" height="12" viewBox="0 0 15 12"><defs><linearGradient id="tg5" x1="0" y1="0" x2="0" y2="1"><stop offset="0" stop-color="#2a3d66"/><stop offset="1" stop-color="#0d121c"/></linearGradient></defs><rect x="0" y="0" width="15" height="12" fill="url(#tg5)"/><path d="M2 8L4 9.5L2 11" stroke="#fff" stroke-width="0.9" fill="none"/></svg>
<svg style="position:absolute;left:174.8px;top:52.2px;overflow:visible" width="15" height="15" viewBox="0 0 15 15"><rect x="7" y="0.5" width="7.5" height="6" fill="#8fb4e8" stroke="#2b3f66"/><rect x="9.5" y="6.5" width="3" height="1.5" fill="#2b3f66"/><rect x="0.5" y="6.5" width="7.5" height="6" fill="#8fb4e8" stroke="#2b3f66"/><rect x="2.5" y="12.5" width="4" height="2" fill="#2b3f66"/><path d="M9 3L5.5 8H8L6 12L11 6.5H8.5L10.5 3Z" fill="#f4d21a" stroke="#a68a00" stroke-width="0.4"/></svg>
<svg style="position:absolute;left:198.7px;top:53px;overflow:visible" width="15" height="13" viewBox="0 0 15 13"><rect x="0.5" y="0.5" width="14" height="12" fill="#eef5f8" stroke="#2f6a78"/><rect x="0" y="0" width="15" height="2" fill="#2f6a78"/><rect x="7" y="0" width="1.2" height="13" fill="#2f6a78"/><path d="M2 11L5.5 7.5 M2 7.5H5.5V11" stroke="#1c8a2a" stroke-width="0" fill="none"/><path d="M1.5 7H5V10.5Z M1.5 11.5L4.2 8.8" fill="#1e8e2b" stroke="#1e8e2b" stroke-width="1.2"/><path d="M13.5 2.5V6H10Z M13.5 2.5L10.8 5.2" fill="#1e8e2b" stroke="#1e8e2b" stroke-width="1.2"/><path d="M9.5 8.5L12.5 11.5" stroke="#8aa" stroke-width="0.6"/></svg>
<svg style="position:absolute;left:225.9px;top:53px;overflow:visible" width="14" height="14" viewBox="0 0 14 14"><polygon points="13.38,5.73 13.50,7.00 11.71,7.94 11.43,8.84 12.40,10.61 11.60,11.60 9.67,10.99 8.84,11.43 8.27,13.38 7.00,13.50 6.06,11.71 5.16,11.43 3.39,12.40 2.40,11.60 3.01,9.67 2.57,8.84 0.62,8.27 0.50,7.00 2.29,6.06 2.57,5.16 1.60,3.39 2.40,2.40 4.33,3.01 5.16,2.57 5.73,0.62 7.00,0.50 7.94,2.29 8.84,2.57 10.61,1.60 11.60,2.40 10.99,4.33 11.43,5.16" fill="#f6f6f6" stroke="#8a8f96" stroke-width="0.9"/><circle cx="7" cy="7" r="2" fill="#fff" stroke="#8a8f96" stroke-width="0.9"/></svg>
<svg style="position:absolute;left:250.8px;top:53px;overflow:visible" width="13" height="14" viewBox="0 0 13 14"><path d="M5.5 0.5H11L13 2.5V9.5H5.5Z" fill="#dfe9f2" stroke="#76879a" stroke-width="0.9"/><path d="M3.0 2.5H8.5L10.5 4.5V11.5H3.0Z" fill="#dfe9f2" stroke="#76879a" stroke-width="0.9"/><path d="M0.5 4.5H6L8 6.5V13.5H0.5Z" fill="#dfe9f2" stroke="#76879a" stroke-width="0.9"/><rect x="2" y="6.5" width="4" height="5" fill="#b9cadb"/></svg>
<svg style="position:absolute;left:568px;top:52px;overflow:visible" width="15" height="15" viewBox="0 0 15 15"><circle cx="8" cy="7.5" r="5.3" fill="#5ab8e0" stroke="#1f5d73" stroke-width="0.8"/><path d="M5 5.5Q8 9 11.5 9.5" stroke="#3a8bd6" stroke-width="1.5" fill="none"/><path d="M6 3Q9 1 12 2.5L11.5 0.5L15 3.5L12 6.5L12 4.5Q9 3.5 7.5 5Z" fill="#d8262e" stroke="#8a1010" stroke-width="0.4"/><path d="M10 12Q7 14 3.5 12.5L3.5 14.5L0.3 11L3.5 8.5L3.5 10.5Q6 11.5 8 10Z" fill="#d8262e" stroke="#8a1010" stroke-width="0.4"/></svg>
<svg style="position:absolute;left:10.9px;top:75.9px;overflow:visible" width="14" height="13" viewBox="0 0 14 13"><rect x="0.7" y="0.7" width="12.6" height="9.6" rx="0.8" fill="#7fb0ea" stroke="#14243c" stroke-width="1.4"/><rect x="2" y="2" width="10" height="3" fill="#a8ccf4"/><rect x="6" y="10.5" width="2" height="1.5" fill="#14243c"/><rect x="3.3" y="11.6" width="7" height="1.6" rx="0.8" fill="#14243c"/></svg>
<svg style="position:absolute;left:159.9px;top:76.5px;overflow:visible" width="14" height="13" viewBox="0 0 14 13"><rect x="0.7" y="0.7" width="12.6" height="9.6" rx="0.8" fill="#7fb0ea" stroke="#14243c" stroke-width="1.4"/><rect x="2" y="2" width="10" height="3" fill="#a8ccf4"/><rect x="6" y="10.5" width="2" height="1.5" fill="#14243c"/><rect x="3.3" y="11.6" width="7" height="1.6" rx="0.8" fill="#14243c"/><path d="M10.5 -0.5L11.3 1.7L13.5 2.5L11.3 3.3L10.5 5.5L9.7 3.3L7.5 2.5L9.7 1.7Z" fill="#e8f6ff" stroke="#6a8aa8" stroke-width="0.5"/></svg>
<svg style="position:absolute;left:17px;top:98.9px;overflow:visible" width="10" height="13" viewBox="0 0 10 13"><path d="M0.5 0.5H7L9.5 3V12.5H0.5Z" fill="#dfe8f0" stroke="#8a9bab" stroke-width="0.8"/><rect x="2" y="2" width="5" height="3" fill="#7aa6d4"/><rect x="2.5" y="6.5" width="5" height="4" fill="#4f78a8"/><rect x="4.5" y="8" width="1.2" height="1.2" fill="#fff"/></svg>
<svg style="position:absolute;left:57.8px;top:97.3px;overflow:visible" width="15" height="14" viewBox="0 0 15 14"><path d="M0.5 4.5H5L6 5.5H12.5V13.5H0.5Z" fill="#e3c453" stroke="#b8962a" stroke-width="0.8"/><path d="M0.5 13.5L2.5 7.5H14.5L12.5 13.5Z" fill="#f8e07e" stroke="#b8962a" stroke-width="0.8"/><path d="M7 5Q8 1.5 11.5 2V0L15 3L11.5 6V4Q9 4 7 5Z" fill="#36a83d" stroke="#1e7a24" stroke-width="0.4"/></svg>
<svg style="position:absolute;left:87.3px;top:98.2px;overflow:visible" width="15" height="13" viewBox="0 0 15 13"><rect x="0.6" y="0.6" width="13.8" height="11.8" fill="#e6f0fa" stroke="#566f8f" stroke-width="1.1"/><rect x="0" y="0" width="15" height="1.5" fill="#4f6a8c"/><path d="M3 3.2L6.6 7.2V10.8H8.4V7.2L12 3.2" fill="none" stroke="#34495f" stroke-width="1.2"/></svg>
<svg style="position:absolute;left:126px;top:100.8px;overflow:visible" width="14" height="9" viewBox="0 0 14 9"><path d="M0.5 4.5L5 0.5V2.8H13.5V6.2H5V8.5Z" fill="#4a90e2" stroke="#2a5fa8" stroke-width="0.8"/></svg>
<svg style="position:absolute;left:154.8px;top:100.8px;overflow:visible" width="14" height="9" viewBox="0 0 14 9"><path d="M13.5 4.5L9 0.5V2.8H0.5V6.2H9V8.5Z" fill="#d2d2d2" stroke="#c4c4c4" stroke-width="0.8"/></svg>
<svg style="position:absolute;left:193px;top:100.6px;overflow:visible" width="13" height="11" viewBox="0 0 13 11"><path d="M0.5 1.5H4.5L5.5 0.5H8L8.5 1.5H12.5V10.5H0.5Z" fill="#f6e27a" stroke="#b59a2a" stroke-width="0.9"/><path d="M0.5 2.5H12.5" stroke="#b59a2a" stroke-width="0.6"/><path d="M3 4.5V8.5H10" stroke="#1a1a1a" stroke-width="1.3" fill="none"/></svg>
<svg style="position:absolute;left:211.6px;top:100.6px;overflow:visible" width="13" height="11" viewBox="0 0 13 11"><path d="M0.5 1.5H4.5L5.5 0.5H8L8.5 1.5H12.5V10.5H0.5Z" fill="#f6e27a" stroke="#b59a2a" stroke-width="0.9"/><path d="M0.5 2.5H12.5" stroke="#b59a2a" stroke-width="0.6"/><path d="M4.5 4L8.5 9" stroke="#1a1a1a" stroke-width="1.3" fill="none"/></svg>
<svg style="position:absolute;left:13.9px;top:120.8px;overflow:visible" width="14" height="14" viewBox="0 0 14 14"><path d="M4.5 0.5H10L12.5 3V10.5H4.5Z" fill="#ececec" stroke="#c8c8c8" stroke-width="0.8"/><path d="M1.5 3.5H7L9.5 6V13.5H1.5Z" fill="#e6e6e6" stroke="#c2c2c2" stroke-width="0.8"/><path d="M5 11V7H3.5L6 4.5L8.5 7H7V11Z" fill="#d0d0d0"/></svg>
<svg style="position:absolute;left:107px;top:120.8px;overflow:visible" width="14" height="14" viewBox="0 0 14 14"><path d="M0.5 1.5H8L9.5 3V13.5H0.5Z" fill="#f2f2f2" stroke="#c6c6c6" stroke-width="0.8"/><path d="M5 11L12.5 2.5L13.8 3.8L6.3 12.3L4.5 12.8Z" fill="#e8e8e8" stroke="#bdbdbd" stroke-width="0.8"/></svg>
<svg style="position:absolute;left:214px;top:121.2px;overflow:visible" width="12" height="12" viewBox="0 0 12 12"><rect x="0.5" y="0.5" width="11" height="11" fill="#f3f7fb" stroke="#6d7f93" stroke-width="0.9"/><path d="M6 2.8V9.2M2.8 6H9.2" stroke="#2d4565" stroke-width="1.7"/></svg>
<svg style="position:absolute;left:267.5px;top:99.3px;overflow:visible" width="9" height="12" viewBox="0 0 9 12"><defs><linearGradient id="lf23" x1="0" x2="1" y1="0" y2="0"><stop offset="0" stop-color="#f2cc62"/><stop offset="0.5" stop-color="#f8dc8a"/><stop offset="1" stop-color="#e6bb4c"/></linearGradient></defs><rect x="0.5" y="0.3" width="8" height="11" fill="url(#lf23)"/><rect x="0.5" y="0.3" width="8" height="1.3" fill="#fbe6a4"/></svg>
<svg style="position:absolute;left:356px;top:96.9px;overflow:visible" width="15" height="14" viewBox="0 0 15 14"><path d="M0.5 4.5H5L6 5.5H12.5V13.5H0.5Z" fill="#e3c453" stroke="#b8962a" stroke-width="0.8"/><path d="M0.5 13.5L2.5 7.5H14.5L12.5 13.5Z" fill="#f8e07e" stroke="#b8962a" stroke-width="0.8"/><path d="M7 5Q8 1.5 11.5 2V0L15 3L11.5 6V4Q9 4 7 5Z" fill="#36a83d" stroke="#1e7a24" stroke-width="0.4"/></svg>
<svg style="position:absolute;left:385.6px;top:98.2px;overflow:visible" width="15" height="13" viewBox="0 0 15 13"><rect x="0.6" y="0.6" width="13.8" height="11.8" fill="#e6f0fa" stroke="#566f8f" stroke-width="1.1"/><rect x="0" y="0" width="15" height="1.5" fill="#4f6a8c"/><path d="M3 3.2L6.6 7.2V10.8H8.4V7.2L12 3.2" fill="none" stroke="#34495f" stroke-width="1.2"/></svg>
<svg style="position:absolute;left:424.2px;top:100.8px;overflow:visible" width="14" height="9" viewBox="0 0 14 9"><path d="M0.5 4.5L5 0.5V2.8H13.5V6.2H5V8.5Z" fill="#4a90e2" stroke="#2a5fa8" stroke-width="0.8"/></svg>
<svg style="position:absolute;left:453px;top:100.8px;overflow:visible" width="14" height="9" viewBox="0 0 14 9"><path d="M13.5 4.5L9 0.5V2.8H0.5V6.2H9V8.5Z" fill="#d2d2d2" stroke="#c4c4c4" stroke-width="0.8"/></svg>
<svg style="position:absolute;left:491.3px;top:100.3px;overflow:visible" width="13" height="11" viewBox="0 0 13 11"><path d="M0.5 1.5H4.5L5.5 0.5H8L8.5 1.5H12.5V10.5H0.5Z" fill="#e4e4e4" stroke="#bdbdbd" stroke-width="0.9"/><path d="M0.5 2.5H12.5" stroke="#bdbdbd" stroke-width="0.6"/><path d="M3 4.5V8.5H10" stroke="#b0b0b0" stroke-width="1.3" fill="none"/></svg>
<svg style="position:absolute;left:510px;top:100.3px;overflow:visible" width="13" height="11" viewBox="0 0 13 11"><path d="M0.5 1.5H4.5L5.5 0.5H8L8.5 1.5H12.5V10.5H0.5Z" fill="#e4e4e4" stroke="#bdbdbd" stroke-width="0.9"/><path d="M0.5 2.5H12.5" stroke="#bdbdbd" stroke-width="0.6"/><path d="M4.5 4L8.5 9" stroke="#b0b0b0" stroke-width="1.3" fill="none"/></svg>
<svg style="position:absolute;left:528.2px;top:98.5px;overflow:visible" width="14" height="13" viewBox="0 0 14 13"><path d="M1 6.5L7 1L13 6.5" stroke="#2e4a6e" stroke-width="1.5" fill="none"/><path d="M3 6V12.5H11V6L7 2.5Z" fill="#dbe9f8" stroke="#2e4a6e" stroke-width="1"/><rect x="5.8" y="8.5" width="2.4" height="4" fill="#3d7cc9"/></svg>
<svg style="position:absolute;left:547px;top:97.7px;overflow:visible" width="14" height="14" viewBox="0 0 14 14"><path d="M2.2 6.5Q3 2 7.5 2H10V0L13.5 3.5L10 7V5H7.5Q5.5 5 5 6.8Z" fill="#3cbf3c" stroke="#1f8a1f" stroke-width="0.6"/><path d="M11.8 7.5Q11 12 6.5 12H4V14L0.5 10.5L4 7V9H6.5Q8.5 9 9 7.2Z" fill="#3cbf3c" stroke="#1f8a1f" stroke-width="0.6"/></svg>
<svg style="position:absolute;left:571px;top:97.8px;overflow:visible" width="15" height="14" viewBox="0 0 15 14"><path d="M0.5 0.5H7L9.5 3V12.5H0.5Z" fill="#c9d8ea" stroke="#7f94ad" stroke-width="0.8"/><circle cx="7.5" cy="8" r="3.3" fill="#e6f2fb" stroke="#2b3f5a" stroke-width="1.2"/><path d="M10 10.5L13.5 13.5" stroke="#2b3f5a" stroke-width="1.8"/></svg>
<svg style="position:absolute;left:673.9px;top:97.3px;overflow:visible" width="15" height="15" viewBox="0 0 15 15"><path d="M2.5 6.5V11H7" stroke="#7a7a7a" stroke-width="0.8" fill="none"/><path d="M0.5 1.5H3L3.8 0.5H6L6.5 1.5H8.5V6.5H0.5Z" fill="#f4dc6a" stroke="#b59a2a" stroke-width="0.8"/><path d="M6.5 8.5H9L9.8 7.5H12L12.5 8.5H14.5V14.5H6.5Z" fill="#f4dc6a" stroke="#b59a2a" stroke-width="0.8"/></svg>
<svg style="position:absolute;left:263.8px;top:120.7px;overflow:visible" width="14" height="14" viewBox="0 0 14 14"><path d="M4.5 0.5H10L12.5 3V10.5H4.5Z" fill="#dfe9f2" stroke="#7c8fa3" stroke-width="0.8"/><path d="M1.5 3.5H7L9.5 6V13.5H1.5Z" fill="#cfdeea" stroke="#71859a" stroke-width="0.8"/><path d="M6 6.5H9.5V4.5L13.8 8.5L9.5 12.5V10.5H6Z" fill="#2e9d3a" stroke="#1b6e25" stroke-width="0.5" transform="rotate(45 9.5 8.5)"/></svg>
<svg style="position:absolute;left:373.2px;top:120.7px;overflow:visible" width="14" height="14" viewBox="0 0 14 14"><path d="M0.5 1.5H8L9.5 3V13.5H0.5Z" fill="#f2f2f2" stroke="#c6c6c6" stroke-width="0.8"/><path d="M5 11L12.5 2.5L13.8 3.8L6.3 12.3L4.5 12.8Z" fill="#e8e8e8" stroke="#bdbdbd" stroke-width="0.8"/></svg>
<svg style="position:absolute;left:459.5px;top:121.3px;overflow:visible" width="13" height="12" viewBox="0 0 13 12"><path d="M1.5 1.5L11.5 10.5M11.5 1.5L1.5 10.5" stroke="#d42020" stroke-width="2.6" stroke-linecap="square"/></svg>
<svg style="position:absolute;left:477.3px;top:120.7px;overflow:visible" width="15" height="14" viewBox="0 0 15 14"><path d="M0.5 1.5H7L9 3.5V13.5H0.5Z" fill="#e6eef6" stroke="#7f92a6" stroke-width="0.8"/><path d="M4.5 11.5L12 2.5L14 4.5L6.5 13L4 13.8Z" fill="#f5c330" stroke="#5a4a20" stroke-width="0.7"/><path d="M12 2.5L13 1.3L15 3.3L14 4.5Z" fill="#d05050"/></svg>
<svg style="position:absolute;left:496px;top:120.7px;overflow:visible" width="14" height="14" viewBox="0 0 14 14"><path d="M0.5 0.5H6L8.5 3V10.5H0.5Z" fill="#e6eef6" stroke="#7f92a6" stroke-width="0.8"/><rect x="5.5" y="6.5" width="8" height="7" fill="#ffffff" stroke="#6f7f8f" stroke-width="0.8"/><path d="M7.3 10L9 11.8L12 8" stroke="#1e8e2b" stroke-width="1.2" fill="none"/></svg>
<svg style="position:absolute;left:592.3px;top:120px;overflow:visible" width="15" height="14" viewBox="0 0 15 14"><path d="M0.5 4.5H4.5L5.5 5.5H11.5V13.5H0.5Z" fill="#f0d35a" stroke="#b8962a" stroke-width="0.8"/><path d="M0.5 7.5H11.5" stroke="#d9b840" stroke-width="0.8"/><path d="M11 0L11.8 2.2L14 3L11.8 3.8L11 6L10.2 3.8L8 3L10.2 2.2Z" fill="#eef6ff" stroke="#6a8aa8" stroke-width="0.6"/></svg>
<svg style="position:absolute;left:654px;top:121.2px;overflow:visible" width="12" height="12" viewBox="0 0 12 12"><rect x="0.5" y="0.5" width="11" height="11" fill="#f3f7fb" stroke="#6d7f93" stroke-width="0.9"/><path d="M6 2.8V9.2M2.8 6H9.2" stroke="#2d4565" stroke-width="1.7"/></svg>
<svg style="position:absolute;left:673.2px;top:121.2px;overflow:visible" width="12" height="12" viewBox="0 0 12 12"><rect x="0.5" y="0.5" width="11" height="11" fill="#f3f7fb" stroke="#6d7f93" stroke-width="0.9"/><path d="M2.8 6H9.2" stroke="#2d4565" stroke-width="1.7"/></svg>
<svg style="position:absolute;left:691.9px;top:121.2px;overflow:visible" width="12" height="12" viewBox="0 0 12 12"><rect x="0.5" y="0.5" width="11" height="11" fill="#f3f7fb" stroke="#6d7f93" stroke-width="0.9"/><path d="M3 3H9L6 9.5Z M3.8 5H8.2" stroke="#2d4565" stroke-width="1.1" fill="none"/></svg>
<svg style="position:absolute;left:11.2px;top:179.5px;overflow:visible" width="9" height="11" viewBox="0 0 9 11"><rect x="0.5" y="0.5" width="7" height="7" fill="#f4d36e"/><path d="M1.2 5V10.2H8.5" stroke="#222" stroke-width="1.3" fill="none"/></svg>
<svg style="position:absolute;left:9.8px;top:195.8px;overflow:visible" width="14" height="14" viewBox="0 0 14 14"><rect x="0.5" y="3.5" width="13" height="9.5" fill="#fbfbfb" stroke="#b8b8b8" stroke-width="0.8"/><path d="M2 6H5M2 8H5M2 10H5" stroke="#d6d6d6" stroke-width="0.6"/><path d="M5 0.2H12.2V8.5L8.6 12L5 8.5Z" fill="#1d5a6e" stroke="#123f4e" stroke-width="0.5"/><ellipse cx="8.6" cy="6" rx="2.6" ry="1.6" fill="#e8f4fb"/><path d="M6.2 8.2L8.6 10.5L11 8.2" stroke="#e8f4fb" stroke-width="0.8" fill="none"/></svg>
<svg style="position:absolute;left:261.5px;top:179.5px;overflow:visible" width="9" height="11" viewBox="0 0 9 11"><rect x="0.5" y="0.5" width="7" height="7" fill="#f4d36e"/><path d="M1.2 5V10.2H8.5" stroke="#222" stroke-width="1.3" fill="none"/></svg>
<svg style="position:absolute;left:261.2px;top:197.3px;overflow:visible" width="9" height="12" viewBox="0 0 9 12"><defs><linearGradient id="lf46" x1="0" x2="1" y1="0" y2="0"><stop offset="0" stop-color="#f2cc62"/><stop offset="0.5" stop-color="#f8dc8a"/><stop offset="1" stop-color="#e6bb4c"/></linearGradient></defs><rect x="0.5" y="0.3" width="8" height="11" fill="url(#lf46)"/><rect x="0.5" y="0.3" width="8" height="1.3" fill="#fbe6a4"/></svg>
<svg style="position:absolute;left:261.2px;top:214.8px;overflow:visible" width="9" height="12" viewBox="0 0 9 12"><defs><linearGradient id="lf47" x1="0" x2="1" y1="0" y2="0"><stop offset="0" stop-color="#f2cc62"/><stop offset="0.5" stop-color="#f8dc8a"/><stop offset="1" stop-color="#e6bb4c"/></linearGradient></defs><rect x="0.5" y="0.3" width="8" height="11" fill="url(#lf47)"/><rect x="0.5" y="0.3" width="8" height="1.3" fill="#fbe6a4"/></svg>
<svg style="position:absolute;left:261.2px;top:232.3px;overflow:visible" width="9" height="12" viewBox="0 0 9 12"><defs><linearGradient id="lf48" x1="0" x2="1" y1="0" y2="0"><stop offset="0" stop-color="#f2cc62"/><stop offset="0.5" stop-color="#f8dc8a"/><stop offset="1" stop-color="#e6bb4c"/></linearGradient></defs><rect x="0.5" y="0.3" width="8" height="11" fill="url(#lf48)"/><rect x="0.5" y="0.3" width="8" height="1.3" fill="#fbe6a4"/></svg>
<svg style="position:absolute;left:261.2px;top:249.8px;overflow:visible" width="9" height="12" viewBox="0 0 9 12"><defs><linearGradient id="lf49" x1="0" x2="1" y1="0" y2="0"><stop offset="0" stop-color="#f2cc62"/><stop offset="0.5" stop-color="#f8dc8a"/><stop offset="1" stop-color="#e6bb4c"/></linearGradient></defs><rect x="0.5" y="0.3" width="8" height="11" fill="url(#lf49)"/><rect x="0.5" y="0.3" width="8" height="1.3" fill="#fbe6a4"/></svg>
<svg style="position:absolute;left:261.2px;top:267.3px;overflow:visible" width="9" height="12" viewBox="0 0 9 12"><defs><linearGradient id="lf50" x1="0" x2="1" y1="0" y2="0"><stop offset="0" stop-color="#f2cc62"/><stop offset="0.5" stop-color="#f8dc8a"/><stop offset="1" stop-color="#e6bb4c"/></linearGradient></defs><rect x="0.5" y="0.3" width="8" height="11" fill="url(#lf50)"/><rect x="0.5" y="0.3" width="8" height="1.3" fill="#fbe6a4"/></svg>
<svg style="position:absolute;left:261.2px;top:284.8px;overflow:visible" width="9" height="12" viewBox="0 0 9 12"><defs><linearGradient id="lf51" x1="0" x2="1" y1="0" y2="0"><stop offset="0" stop-color="#f2cc62"/><stop offset="0.5" stop-color="#f8dc8a"/><stop offset="1" stop-color="#e6bb4c"/></linearGradient></defs><rect x="0.5" y="0.3" width="8" height="11" fill="url(#lf51)"/><rect x="0.5" y="0.3" width="8" height="1.3" fill="#fbe6a4"/></svg>
<svg style="position:absolute;left:261.2px;top:302.3px;overflow:visible" width="9" height="12" viewBox="0 0 9 12"><defs><linearGradient id="lf52" x1="0" x2="1" y1="0" y2="0"><stop offset="0" stop-color="#f2cc62"/><stop offset="0.5" stop-color="#f8dc8a"/><stop offset="1" stop-color="#e6bb4c"/></linearGradient></defs><rect x="0.5" y="0.3" width="8" height="11" fill="url(#lf52)"/><rect x="0.5" y="0.3" width="8" height="1.3" fill="#fbe6a4"/></svg>
<svg style="position:absolute;left:261.2px;top:319.8px;overflow:visible" width="9" height="12" viewBox="0 0 9 12"><defs><linearGradient id="lf53" x1="0" x2="1" y1="0" y2="0"><stop offset="0" stop-color="#f2cc62"/><stop offset="0.5" stop-color="#f8dc8a"/><stop offset="1" stop-color="#e6bb4c"/></linearGradient></defs><rect x="0.5" y="0.3" width="8" height="11" fill="url(#lf53)"/><rect x="0.5" y="0.3" width="8" height="1.3" fill="#fbe6a4"/></svg>
<svg style="position:absolute;left:261.2px;top:337.3px;overflow:visible" width="9" height="12" viewBox="0 0 9 12"><defs><linearGradient id="lf54" x1="0" x2="1" y1="0" y2="0"><stop offset="0" stop-color="#f2cc62"/><stop offset="0.5" stop-color="#f8dc8a"/><stop offset="1" stop-color="#e6bb4c"/></linearGradient></defs><rect x="0.5" y="0.3" width="8" height="11" fill="url(#lf54)"/><rect x="0.5" y="0.3" width="8" height="1.3" fill="#fbe6a4"/></svg>
<svg style="position:absolute;left:261.2px;top:354.8px;overflow:visible" width="9" height="12" viewBox="0 0 9 12"><defs><linearGradient id="lf55" x1="0" x2="1" y1="0" y2="0"><stop offset="0" stop-color="#f2cc62"/><stop offset="0.5" stop-color="#f8dc8a"/><stop offset="1" stop-color="#e6bb4c"/></linearGradient></defs><rect x="0.5" y="0.3" width="8" height="11" fill="url(#lf55)"/><rect x="0.5" y="0.3" width="8" height="1.3" fill="#fbe6a4"/></svg>
<svg style="position:absolute;left:261.2px;top:372.3px;overflow:visible" width="9" height="12" viewBox="0 0 9 12"><defs><linearGradient id="lf56" x1="0" x2="1" y1="0" y2="0"><stop offset="0" stop-color="#f2cc62"/><stop offset="0.5" stop-color="#f8dc8a"/><stop offset="1" stop-color="#e6bb4c"/></linearGradient></defs><rect x="0.5" y="0.3" width="8" height="11" fill="url(#lf56)"/><rect x="0.5" y="0.3" width="8" height="1.3" fill="#fbe6a4"/></svg>
<svg style="position:absolute;left:261.2px;top:389.8px;overflow:visible" width="9" height="12" viewBox="0 0 9 12"><defs><linearGradient id="lf57" x1="0" x2="1" y1="0" y2="0"><stop offset="0" stop-color="#f2cc62"/><stop offset="0.5" stop-color="#f8dc8a"/><stop offset="1" stop-color="#e6bb4c"/></linearGradient></defs><rect x="0.5" y="0.3" width="8" height="11" fill="url(#lf57)"/><rect x="0.5" y="0.3" width="8" height="1.3" fill="#fbe6a4"/></svg>
<svg style="position:absolute;left:261.2px;top:407.3px;overflow:visible" width="9" height="12" viewBox="0 0 9 12"><defs><linearGradient id="lf58" x1="0" x2="1" y1="0" y2="0"><stop offset="0" stop-color="#f2cc62"/><stop offset="0.5" stop-color="#f8dc8a"/><stop offset="1" stop-color="#e6bb4c"/></linearGradient></defs><rect x="0.5" y="0.3" width="8" height="11" fill="url(#lf58)"/><rect x="0.5" y="0.3" width="8" height="1.3" fill="#fbe6a4"/></svg>
<svg style="position:absolute;left:261.2px;top:424.8px;overflow:visible" width="9" height="12" viewBox="0 0 9 12"><defs><linearGradient id="lf59" x1="0" x2="1" y1="0" y2="0"><stop offset="0" stop-color="#f2cc62"/><stop offset="0.5" stop-color="#f8dc8a"/><stop offset="1" stop-color="#e6bb4c"/></linearGradient></defs><rect x="0.5" y="0.3" width="8" height="11" fill="url(#lf59)"/><rect x="0.5" y="0.3" width="8" height="1.3" fill="#fbe6a4"/></svg>
<svg style="position:absolute;left:261.2px;top:442.3px;overflow:visible" width="9" height="12" viewBox="0 0 9 12"><defs><linearGradient id="lf60" x1="0" x2="1" y1="0" y2="0"><stop offset="0" stop-color="#f2cc62"/><stop offset="0.5" stop-color="#f8dc8a"/><stop offset="1" stop-color="#e6bb4c"/></linearGradient></defs><rect x="0.5" y="0.3" width="8" height="11" fill="url(#lf60)"/><rect x="0.5" y="0.3" width="8" height="1.3" fill="#fbe6a4"/></svg>
<svg style="position:absolute;left:258px;top:430.8px;overflow:visible" width="7" height="7" viewBox="0 0 7 7"><rect x="0.3" y="0.3" width="6.4" height="6.4" fill="#fff" stroke="#9aa7b8" stroke-width="0.6"/><path d="M1.5 6Q2 2.5 5 2.2L4.2 1L6.2 1.2L5.6 3.2L5 2.4" fill="#1f5fc6" stroke="#1f5fc6" stroke-width="1"/></svg>
<svg style="position:absolute;left:259.8px;top:458.5px;overflow:visible" width="14" height="14" viewBox="0 0 14 14"><rect x="0.5" y="3.5" width="13" height="9.5" fill="#fbfbfb" stroke="#b8b8b8" stroke-width="0.8"/><path d="M2 6H5M2 8H5M2 10H5" stroke="#d6d6d6" stroke-width="0.6"/><path d="M5 0.2H12.2V8.5L8.6 12L5 8.5Z" fill="#1d5a6e" stroke="#123f4e" stroke-width="0.5"/><ellipse cx="8.6" cy="6" rx="2.6" ry="1.6" fill="#e8f4fb"/><path d="M6.2 8.2L8.6 10.5L11 8.2" stroke="#e8f4fb" stroke-width="0.8" fill="none"/></svg>
<svg style="position:absolute;left:831.8px;top:630.5px;overflow:visible" width="11" height="14" viewBox="0 0 11 14"><path d="M2.8 6.5V4Q2.8 1 5.5 1Q8.2 1 8.2 4V6.5" stroke="#c9a82a" stroke-width="1.5" fill="none"/><rect x="0.6" y="6" width="9.8" height="7.4" rx="1" fill="#f3dc4a" stroke="#b8972a" stroke-width="0.8"/><rect x="5" y="8.8" width="1.2" height="2" fill="#5a4a10"/></svg>
<svg style="position:absolute;left:923px;top:630.7px;overflow:visible" width="13" height="13" viewBox="0 0 13 13"><rect x="0.5" y="0.5" width="9" height="7" fill="#e8e8e8" stroke="#b8b8b8" stroke-width="0.8"/><rect x="3.5" y="2.5" width="9" height="6.5" fill="#eeeeee" stroke="#b0b0b0" stroke-width="0.8"/><path d="M8 9V11.5M3.5 12H12.5" stroke="#a8a8a8" stroke-width="1.1"/></svg>
<div style="left:208px;top:483px;width:600px;height:349px;background:#ffffff;box-shadow:0 0 8px 2px rgba(0,0,0,0.22);"></div>
<div style="left:208px;top:483px;width:600px;height:1px;background:#6f6f6f;"></div>
<div style="left:208px;top:483px;width:1px;height:349px;background:#6f6f6f;"></div>
<div style="left:807px;top:483px;width:1px;height:349px;background:#6f6f6f;"></div>
<div style="left:208px;top:831px;width:600px;height:1px;background:#6f6f6f;"></div>
<svg style="position:absolute;left:215.8px;top:488.9px;overflow:visible" width="15" height="15" viewBox="0 0 15 15"><rect x="6.5" y="0.5" width="7.5" height="6" rx="1" fill="#8080d0" stroke="#14143c" stroke-width="1"/><rect x="8" y="2" width="4.5" height="2.5" fill="#101080"/><path d="M7.5 7.5H13.5L14.5 10H8.5Z" fill="#d8d8e8" stroke="#14143c" stroke-width="0.8"/><rect x="1" y="6.5" width="6" height="6" rx="1" fill="#9090e0" stroke="#14143c" stroke-width="0.8"/><rect x="2.2" y="8" width="3.5" height="3" fill="#101080"/><path d="M0.5 14.5L1.5 12.5H8.5L9.5 14.5Z" fill="#e8e8f0" stroke="#14143c" stroke-width="1"/><path d="M5.5 4.5L9.5 10.5L8 12" stroke="#d8e070" stroke-width="1.4" fill="none"/></svg>
<div class="t" style="left:234.00px;top:492.55px;font-size:11px;line-height:11px;color:#000;font-family:'Liberation Sans';letter-spacing:-0.232px;">root@szne_nighthawk1_rumpel_195: ~</div>
<div style="left:697px;top:497px;width:9px;height:1px;background:#222;"></div>
<div style="left:738px;top:492px;width:10px;height:9px;background:transparent;border:1px solid #222;border-radius:1.5px;box-sizing:border-box;"></div>
<svg style="position:absolute;left:781px;top:492px" width="10" height="10" viewBox="0 0 10 10"><path d="M0.5 0.5L9.5 9.5M9.5 0.5L0.5 9.5" stroke="#222" stroke-width="1"/></svg>
<div style="left:209px;top:510px;width:582px;height:321px;background:#000000;"></div>
<div style="left:791px;top:510px;width:16px;height:321px;background:#f0f0f0;"></div>
<div style="left:792px;top:585px;width:14px;height:230px;background:#cdcdcd;"></div>
<div style="left:792px;top:511px;width:14px;height:20px;background:#f7f7f7;"></div>
<div style="left:792px;top:815px;width:14px;height:16px;background:#f9f9f9;"></div>
<svg style="position:absolute;left:796px;top:517px" width="7" height="5" viewBox="0 0 7 5"><path d="M0.5 4.5L3.5 1L6.5 4.5" stroke="#333" stroke-width="1.3" fill="none"/></svg>
<svg style="position:absolute;left:796px;top:821px" width="7" height="5" viewBox="0 0 7 5"><path d="M0.5 0.5L3.5 4L6.5 0.5" stroke="#333" stroke-width="1.3" fill="none"/></svg>
<div class="t" style="left:210.30px;top:512.73px;font-size:12.1px;line-height:12.1px;color:#c2c2c2;font-family:'Liberation Mono';">  <span style="position:relative;top:1.6px">_</span><span style="position:relative;top:1.6px">_</span><span style="position:relative;top:1.6px">_</span><span style="position:relative;top:1.6px">_</span><span style="position:relative;top:1.6px">_</span><span style="position:relative;top:1.6px">_</span><span style="position:relative;top:1.6px">_</span>                     <span style="position:relative;top:1.6px">_</span><span style="position:relative;top:1.6px">_</span><span style="position:relative;top:1.6px">_</span><span style="position:relative;top:1.6px">_</span><span style="position:relative;top:1.6px">_</span><span style="position:relative;top:1.6px">_</span><span style="position:relative;top:1.6px">_</span><span style="position:relative;top:1.6px">_</span>        <span style="position:relative;top:1.6px">_</span><span style="position:relative;top:1.6px">_</span></div>
<div class="t" style="left:210.30px;top:526.00px;font-size:12.1px;line-height:12.1px;color:#c2c2c2;font-family:'Liberation Mono';"> |       |.-----.-----.-----.|  |  |  |.----.|  |<span style="position:relative;top:1.6px">_</span></div>
<div class="t" style="left:210.30px;top:539.27px;font-size:12.1px;line-height:12.1px;color:#c2c2c2;font-family:'Liberation Mono';"> |   -   ||  <span style="position:relative;top:1.6px">_</span>  |  -<span style="position:relative;top:1.6px">_</span><span style="position:relative;top:1.6px">_</span>|     ||  |  |  ||   <span style="position:relative;top:1.6px">_</span>||   <span style="position:relative;top:1.6px">_</span>|</div>
<div class="t" style="left:210.30px;top:552.54px;font-size:12.1px;line-height:12.1px;color:#c2c2c2;font-family:'Liberation Mono';"> |<span style="position:relative;top:1.6px">_</span><span style="position:relative;top:1.6px">_</span><span style="position:relative;top:1.6px">_</span><span style="position:relative;top:1.6px">_</span><span style="position:relative;top:1.6px">_</span><span style="position:relative;top:1.6px">_</span><span style="position:relative;top:1.6px">_</span>||   <span style="position:relative;top:1.6px">_</span><span style="position:relative;top:1.6px">_</span>|<span style="position:relative;top:1.6px">_</span><span style="position:relative;top:1.6px">_</span><span style="position:relative;top:1.6px">_</span><span style="position:relative;top:1.6px">_</span><span style="position:relative;top:1.6px">_</span>|<span style="position:relative;top:1.6px">_</span><span style="position:relative;top:1.6px">_</span>|<span style="position:relative;top:1.6px">_</span><span style="position:relative;top:1.6px">_</span>||<span style="position:relative;top:1.6px">_</span><span style="position:relative;top:1.6px">_</span><span style="position:relative;top:1.6px">_</span><span style="position:relative;top:1.6px">_</span><span style="position:relative;top:1.6px">_</span><span style="position:relative;top:1.6px">_</span><span style="position:relative;top:1.6px">_</span><span style="position:relative;top:1.6px">_</span>||<span style="position:relative;top:1.6px">_</span><span style="position:relative;top:1.6px">_</span>|  |<span style="position:relative;top:1.6px">_</span><span style="position:relative;top:1.6px">_</span><span style="position:relative;top:1.6px">_</span><span style="position:relative;top:1.6px">_</span>|</div>
<div class="t" style="left:210.30px;top:565.81px;font-size:12.1px;line-height:12.1px;color:#c2c2c2;font-family:'Liberation Mono';">          |<span style="position:relative;top:1.6px">_</span><span style="position:relative;top:1.6px">_</span>| W I R E L E S S   F R E E D O M</div>
<div class="t" style="left:210.30px;top:579.08px;font-size:12.1px;line-height:12.1px;color:#c2c2c2;font-family:'Liberation Mono';"> -----------------------------------------------------</div>
<div class="t" style="left:210.30px;top:592.35px;font-size:12.1px;line-height:12.1px;color:#c2c2c2;font-family:'Liberation Mono';"> OpenWrt 23.05.0, r23497-6637af95aa</div>
<div class="t" style="left:210.30px;top:605.62px;font-size:12.1px;line-height:12.1px;color:#c2c2c2;font-family:'Liberation Mono';"> -----------------------------------------------------</div>
<div class="t" style="left:210.30px;top:618.89px;font-size:12.1px;line-height:12.1px;color:#c2c2c2;font-family:'Liberation Mono';">root@szne<span style="position:relative;top:1.6px">_</span>nighthawk1<span style="position:relative;top:1.6px">_</span>rumpel<span style="position:relative;top:1.6px">_</span>195:~# pwd</div>
<div class="t" style="left:210.30px;top:632.16px;font-size:12.1px;line-height:12.1px;color:#c2c2c2;font-family:'Liberation Mono';">/root</div>
<div class="t" style="left:210.30px;top:645.43px;font-size:12.1px;line-height:12.1px;color:#c2c2c2;font-family:'Liberation Mono';">root@szne<span style="position:relative;top:1.6px">_</span>nighthawk1<span style="position:relative;top:1.6px">_</span>rumpel<span style="position:relative;top:1.6px">_</span>195:~# sh</div>
<div class="t" style="left:210.30px;top:685.24px;font-size:12.1px;line-height:12.1px;color:#c2c2c2;font-family:'Liberation Mono';">BusyBox v1.36.1 (2023-10-09 21:45:35 UTC) built-in shell (ash)</div>
<div class="t" style="left:210.30px;top:711.78px;font-size:12.1px;line-height:12.1px;color:#c2c2c2;font-family:'Liberation Mono';">root@szne<span style="position:relative;top:1.6px">_</span>nighthawk1<span style="position:relative;top:1.6px">_</span>rumpel<span style="position:relative;top:1.6px">_</span>195:~# ls -h</div>
<div class="t" style="left:210.30px;top:725.05px;font-size:12.1px;line-height:12.1px;color:#c2c2c2;font-family:'Liberation Mono';">root@szne<span style="position:relative;top:1.6px">_</span>nighthawk1<span style="position:relative;top:1.6px">_</span>rumpel<span style="position:relative;top:1.6px">_</span>195:~# cd /root/</div>
<div class="t" style="left:210.30px;top:738.32px;font-size:12.1px;line-height:12.1px;color:#c2c2c2;font-family:'Liberation Mono';">root@szne<span style="position:relative;top:1.6px">_</span>nighthawk1<span style="position:relative;top:1.6px">_</span>rumpel<span style="position:relative;top:1.6px">_</span>195:~# ls</div>
<div class="t" style="left:210.30px;top:751.59px;font-size:12.1px;line-height:12.1px;color:#c2c2c2;font-family:'Liberation Mono';">root@szne<span style="position:relative;top:1.6px">_</span>nighthawk1<span style="position:relative;top:1.6px">_</span>rumpel<span style="position:relative;top:1.6px">_</span>195:~# cd /root/</div>
<div class="t" style="left:210.30px;top:764.86px;font-size:12.1px;line-height:12.1px;color:#c2c2c2;font-family:'Liberation Mono';">root@szne<span style="position:relative;top:1.6px">_</span>nighthawk1<span style="position:relative;top:1.6px">_</span>rumpel<span style="position:relative;top:1.6px">_</span>195:~# ls</div>
<div class="t" style="left:210.30px;top:778.13px;font-size:12.1px;line-height:12.1px;color:#c2c2c2;font-family:'Liberation Mono';">root@szne<span style="position:relative;top:1.6px">_</span>nighthawk1<span style="position:relative;top:1.6px">_</span>rumpel<span style="position:relative;top:1.6px">_</span>195:~# ls</div>
<div class="t" style="left:210.30px;top:791.40px;font-size:12.1px;line-height:12.1px;color:#c2c2c2;font-family:'Liberation Mono';">root@szne<span style="position:relative;top:1.6px">_</span>nighthawk1<span style="position:relative;top:1.6px">_</span>rumpel<span style="position:relative;top:1.6px">_</span>195:~# sh /root/s2s<span style="position:relative;top:1.6px">_</span>combined.sh</div>
<div class="t" style="left:210.30px;top:804.67px;font-size:12.1px;line-height:12.1px;color:#c2c2c2;font-family:'Liberation Mono';">sh: can't open '/root/s2s<span style="position:relative;top:1.6px">_</span>combined.sh': No such file or directory</div>
<div class="t" style="left:210.30px;top:817.94px;font-size:12.1px;line-height:12.1px;color:#c2c2c2;font-family:'Liberation Mono';">root@szne<span style="position:relative;top:1.6px">_</span>nighthawk1<span style="position:relative;top:1.6px">_</span>rumpel<span style="position:relative;top:1.6px">_</span>195:~# </div>
<svg style="position:absolute;left:464.4px;top:816.71px" width="6.5" height="13.3" viewBox="0 0 6.5 13.3"><rect width="6.5" height="13.3" fill="#00ff00"/></svg>
</div></body></html>
